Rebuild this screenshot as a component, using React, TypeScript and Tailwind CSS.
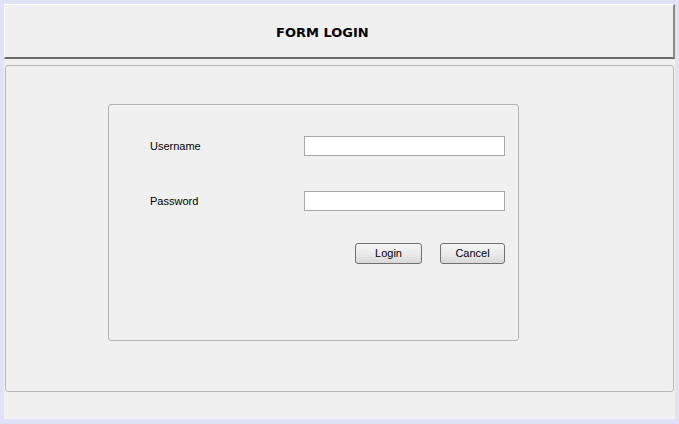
import React from "react";

export default function App() {
  const font = { fontFamily: '"Liberation Sans", Arial, sans-serif' };
  return (
    <div className="w-[679px] h-[424px] bg-[#e1e1f7] pt-[4px] pl-[4px] pr-[4px] pb-[5px]" style={font}>
      <div className="w-full h-full bg-[#f0f0f0] flex flex-col">
        <div className="h-[55px] border-t border-l border-white border-b-2 border-r-2 border-b-[#6b6b6b] border-r-[#8a8a8a] flex items-center pl-[271px] pt-[4px]">
          <span
            className="text-[13px] font-bold text-black"
            style={{ fontFamily: '"DejaVu Sans", Verdana, sans-serif' }}
          >
            FORM LOGIN
          </span>
        </div>
        <div className="mt-[6px] ml-[1px] w-[669px] h-[327px] border border-[#b9b9b9] rounded-[3px] flex flex-col">
          <div className="mt-[38px] ml-[102px] w-[411px] h-[237px] border border-[#b4b4b4] rounded-[3px] flex flex-col text-[11px] text-black">
            <div className="mt-[31px] h-[20px] flex items-center">
              <div className="w-[195px] pl-[41px]">Username</div>
              <div className="w-[201px] h-[20px] border border-[#a8a8a8] bg-white" />
            </div>
            <div className="mt-[35px] h-[20px] flex items-center">
              <div className="w-[195px] pl-[41px]">Password</div>
              <div className="w-[201px] h-[20px] border border-[#a8a8a8] bg-white" />
            </div>
            <div className="mt-[32px] flex pl-[246px] gap-[18px]">
              <button className="w-[67px] h-[21px] border border-[#707070] rounded-[3px] bg-gradient-to-b from-[#f4f4f4] via-[#ebebeb] to-[#d8d8d8] text-[11px] text-black">
                Login
              </button>
              <button className="w-[65px] h-[21px] border border-[#707070] rounded-[3px] bg-gradient-to-b from-[#f4f4f4] via-[#ebebeb] to-[#d8d8d8] text-[11px] text-black">
                Cancel
              </button>
            </div>
          </div>
        </div>
      </div>
    </div>
  );
}
